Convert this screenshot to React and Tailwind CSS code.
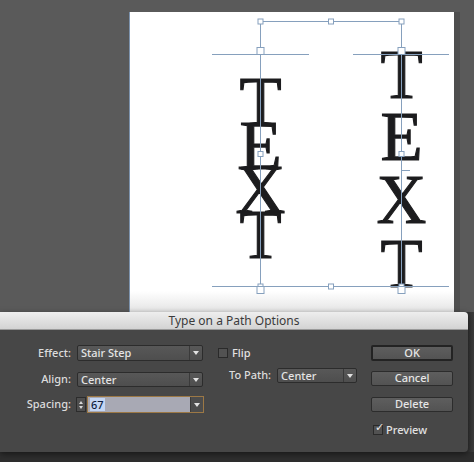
import React from 'react';

const ui = { fontFamily: '"Noto Sans", "Open Sans", sans-serif' };

function Arrow({ color = 'border-t-[#e2e2e2]' }) {
  return (
    <span
      className={`w-0 h-0 border-l-[3px] border-r-[3px] border-t-[4px] border-l-transparent border-r-transparent ${color}`}
    />
  );
}

function Select({ value, width }) {
  return (
    <div
      className={`${width} h-full flex border border-[#2c2c2c] rounded-[2px] bg-[linear-gradient(to_bottom,#585858,#4e4e4e)]`}
    >
      <span className="flex-1 pl-[3px] text-[11px] leading-[14px] font-medium text-[#e4e4e4] truncate">{value}</span>
      <span className="w-[13px] flex items-center justify-center border-l border-[#3a3a3a]">
        <Arrow />
      </span>
    </div>
  );
}

function Button({ label, primary }) {
  return (
    <div
      className={`w-[82px] h-full flex items-center justify-center rounded-[2px] text-[11px] font-medium text-[#e6e6e6] bg-[linear-gradient(to_bottom,#5e5e5e,#535353)] ${
        primary ? 'border-2 border-[#232323]' : 'border border-[#2c2c2c]'
      }`}
    >
      {label}
    </div>
  );
}

function Handle({ x, y, s = 5 }) {
  return (
    <rect x={x - s / 2} y={y - s / 2} width={s} height={s} fill="#fff" stroke="#86a0bd" strokeWidth="1" />
  );
}

function Page() {
  const line = '#86a0bd';
  const letter = { fontFamily: '"Liberation Serif", serif', fontSize: 69 };
  return (
    <svg width="325" height="300" viewBox="129 12 325 300" className="block">
      <g fill="#1c1c1e" stroke="#1c1c1e" strokeWidth="1.1" textAnchor="middle" style={letter}>
        <text x="260.5" y="125">T</text>
        <text x="260.5" y="169">E</text>
        <text x="260.5" y="213">X</text>
        <text x="260.5" y="258">T</text>
        <text x="401.5" y="98">T</text>
        <text x="401.5" y="160">E</text>
        <text x="401.5" y="223">X</text>
        <text x="401.5" y="287">T</text>
      </g>
      <g stroke={line} strokeWidth="1" fill="none">
        <line x1="260.5" y1="21" x2="260.5" y2="291" />
        <line x1="401.5" y1="21" x2="401.5" y2="291" />
        <line x1="260" y1="21.5" x2="401" y2="21.5" />
        <line x1="212" y1="54.5" x2="309" y2="54.5" />
        <line x1="353" y1="54.5" x2="449" y2="54.5" />
        <line x1="212" y1="286.5" x2="449" y2="286.5" />
        <line x1="401" y1="170.5" x2="410" y2="170.5" />
      </g>
      <Handle x={260.5} y={21.5} />
      <Handle x={331} y={21.5} />
      <Handle x={401.5} y={21.5} />
      <Handle x={260.5} y={51} s={7} />
      <Handle x={401.5} y={51} s={7} />
      <Handle x={260.5} y={154} />
      <Handle x={401.5} y={154} />
      <Handle x={260.5} y={286.5} />
      <Handle x={331} y={286.5} />
      <Handle x={401.5} y={286.5} />
      <Handle x={260.5} y={290} s={7} />
      <Handle x={401.5} y={290} s={7} />
    </svg>
  );
}

export default function App() {
  return (
    <div className="w-[474px] h-[462px] overflow-hidden flex flex-col bg-[#2e2e2e]" style={ui}>
      {/* document area */}
      <div className="h-[312px] shrink-0 flex pl-[129px] pt-[12px] bg-[#5a5a5a]">
        <div className="w-[325px] h-[300px] shadow-[inset_1px_0_0_#7d93ad] bg-[linear-gradient(to_bottom,#ffffff_93%,#e4e4e4)]">
          <Page />
        </div>
        <div className="w-[6px] bg-[#4e4e4e]" />
      </div>

      {/* dialog */}
      <div className="flex h-[140px] shrink-0 bg-[linear-gradient(to_right,#2e2e2e_98%,#3c3c3c)]">
        <div className="w-[468px] h-full flex flex-col rounded-r-[4px] overflow-hidden bg-[#474747] shadow-[0_2px_6px_rgba(0,0,0,0.5)]">
          <div className="h-[18px] shrink-0 flex items-center justify-center border-b border-[#9a9a9a] bg-[linear-gradient(to_bottom,#eeeeee,#d3d3d3)] text-[12px] text-[#3b3b3b]">
            Type on a Path Options
          </div>

          <div className="flex pt-[15px] font-medium">
            {/* left column */}
            <div className="flex flex-col">
              <div className="h-[16px] flex items-center">
                <span className="w-[71px] text-right text-[11px] text-[#dcdcdc]">Effect:</span>
                <div className="ml-[6px] h-full">
                  <Select value="Stair Step" width="w-[126px]" />
                </div>
              </div>
              <div className="h-[15px] mt-[11px] flex items-center">
                <span className="w-[71px] text-right text-[11px] text-[#dcdcdc]">Align:</span>
                <div className="ml-[6px] h-full">
                  <Select value="Center" width="w-[126px]" />
                </div>
              </div>
              <div className="h-[17px] mt-[9px] flex items-center">
                <span className="w-[71px] text-right text-[11px] text-[#dcdcdc]">Spacing:</span>
                <div className="ml-[5px] w-[10px] h-[15px] flex flex-col items-center justify-center gap-[2px] border border-[#2c2c2c] bg-[#4e4e4e]">
                  <span className="w-0 h-0 border-l-[2px] border-r-[2px] border-b-[3px] border-l-transparent border-r-transparent border-b-[#d8d8d8]" />
                  <span className="w-0 h-0 border-l-[2px] border-r-[2px] border-t-[3px] border-l-transparent border-r-transparent border-t-[#d8d8d8]" />
                </div>
                <div className="ml-[1px] w-[117px] h-full flex border border-[#9c7845] bg-[#a8a9b4]">
                  <span className="flex-1 pl-[2px] flex items-center">
                    <span className="bg-[#c4d6f4] text-[11px] leading-[13px] text-[#0d1c3e] px-[1px]">67</span>
                  </span>
                  <span className="w-[13px] flex items-center justify-center bg-[#4c4c4c] border-l border-[#3a3a3a]">
                    <Arrow />
                  </span>
                </div>
              </div>
            </div>

            {/* middle column */}
            <div className="flex flex-col ml-[14px]">
              <div className="h-[16px] flex items-center">
                <span className="w-[10px] h-[10px] border border-[#2a2a2a] bg-[#525252]" />
                <span className="ml-[4px] text-[11px] text-[#e2e2e2]">Flip</span>
              </div>
              <div className="h-[15px] mt-[7px] flex items-center pl-[11px]">
                <span className="text-[11px] text-[#dcdcdc]">To Path:</span>
                <div className="ml-[6px] h-full">
                  <Select value="Center" width="w-[80px]" />
                </div>
              </div>
            </div>

            {/* buttons */}
            <div className="flex flex-col ml-[14px]">
              <div className="h-[16px]">
                <Button label="OK" primary />
              </div>
              <div className="h-[15px] mt-[10px]">
                <Button label="Cancel" />
              </div>
              <div className="h-[15px] mt-[11px]">
                <Button label="Delete" />
              </div>
              <div className="h-[14px] mt-[11px] flex items-center pl-[2px]">
                <span className="relative w-[10px] h-[10px] border border-[#2a2a2a] bg-[#525252]">
                  <span className="absolute -top-[5px] left-[1px] text-[11px] leading-[11px] text-[#ececec]">✓</span>
                </span>
                <span className="ml-[3px] text-[11px] text-[#e2e2e2]">Preview</span>
              </div>
            </div>
          </div>
        </div>
      </div>
    </div>
  );
}
